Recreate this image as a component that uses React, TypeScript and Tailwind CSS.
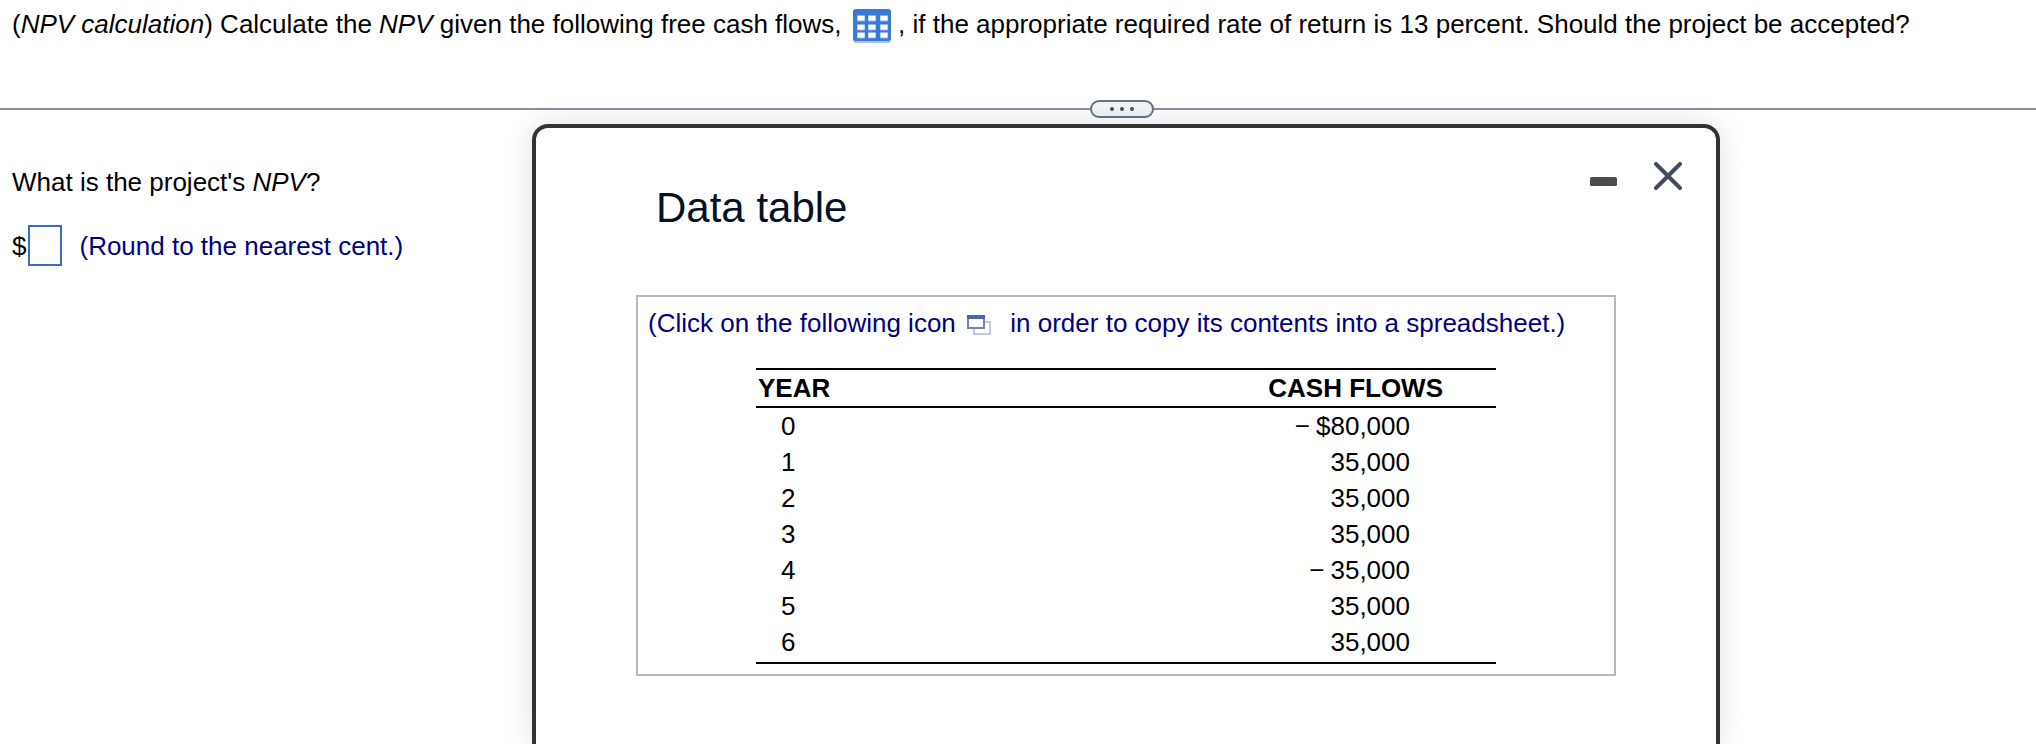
import React from "react";

interface CashFlow {
    year: number;
    amount: string;
    negative?: boolean;
}

const cashFlows: CashFlow[] = [
    { year: 0, amount: "$80,000", negative: true },
    { year: 1, amount: "35,000" },
    { year: 2, amount: "35,000" },
    { year: 3, amount: "35,000" },
    { year: 4, amount: "35,000", negative: true },
    { year: 5, amount: "35,000" },
    { year: 6, amount: "35,000" },
];

const TableIcon: React.FC = () => (
    <svg width="38" height="34" viewBox="0 0 38 34">
        <rect y="1" width="38" height="33" rx="3" fill="#a9c5ee" />
        <rect y="0" width="38" height="32" rx="3" fill="#3b7ad4" />
        {[6, 15, 23].map((y) =>
            [4, 15, 27].map((x) => (
                <g key={`${x}-${y}`}>
                    <rect x={x} y={y} width="8" height="6.5" rx="1" fill="#8fb3e8" />
                    <rect x={x + 0.5} y={y + 1} width="7" height="4.5" fill="#fff" />
                </g>
            ))
        )}
    </svg>
);

const CopyIcon: React.FC = () => (
    <svg width="24" height="20" viewBox="0 0 24 20">
        <rect x="7" y="7" width="16" height="12" fill="#fff" stroke="#c3c7e3" strokeWidth="2" />
        <rect x="1" y="1" width="16" height="12" fill="#fff" stroke="#7482b8" strokeWidth="2" />
        <rect width="18" height="4" fill="#5363a5" />
    </svg>
);

const CashFlowTable: React.FC = () => (
    <table className="w-full border-separate border-spacing-0 border-y-2 border-black pb-0.5 text-black">
        <thead>
            <tr>
                <th className="border-b-2 border-black p-0 pl-0.5 text-left font-bold">YEAR</th>
                <th className="border-b-2 border-black p-0 pr-[53px] text-right font-bold">
                    CASH FLOWS
                </th>
            </tr>
        </thead>
        <tbody>
            {cashFlows.map((flow) => (
                <tr key={flow.year}>
                    <td className="p-0 pl-[25px]">{flow.year}</td>
                    <td className="p-0 pr-[86px] text-right">
                        {flow.negative && <span className="mr-1.5">−</span>}
                        {flow.amount}
                    </td>
                </tr>
            ))}
        </tbody>
    </table>
);

const DataTableDialog: React.FC = () => (
    <section
        role="dialog"
        aria-labelledby="dialog-title"
        className="mr-[316px] flex-1 rounded-t-2xl border-4 border-b-0 border-[#333335] bg-white pb-16 shadow-[0_0_32px_rgba(0,0,0,0.12)]"
    >
        {/* Title bar */}
        <div className="flex items-start justify-between pt-[34px] pr-[34px] pl-[120px]">
            <h2
                id="dialog-title"
                className="mt-[22px] text-[42px] leading-[48px] text-[#05112a]"
            >
                Data table
            </h2>
            <div className="flex gap-9">
                <button type="button" aria-label="Minimize">
                    <svg width="28" height="28" viewBox="0 0 28 28">
                        <rect y="15" width="27" height="9" rx="1.5" fill="#4d4d4d" />
                    </svg>
                </button>
                <button type="button" aria-label="Close">
                    <svg width="28" height="28" viewBox="0 0 28 28">
                        <path
                            d="M2 2L26 26M26 2L2 26"
                            stroke="#434d5a"
                            strokeWidth="4"
                            strokeLinecap="round"
                        />
                    </svg>
                </button>
            </div>
        </div>

        {/* Contents */}
        <div className="mx-[100px] mt-[63px] border-2 border-[#b8b8b8] pt-2 pb-2.5">
            <p className="px-2.5 text-[#000080]">
                (Click on the following icon{" "}
                <button type="button" aria-label="Copy to spreadsheet" className="mx-1 align-middle">
                    <CopyIcon />
                </button>{" "}
                <span className="ml-2">
                    in order to copy its contents into a spreadsheet.)
                </span>
            </p>
            <div className="mx-[118px] mt-[27px]">
                <CashFlowTable />
            </div>
        </div>
    </section>
);

export default function App() {
    return (
        <div className="flex min-h-screen flex-col overflow-hidden bg-white font-['Liberation_Sans',Arial,sans-serif] text-[26px] leading-9 text-black">
            {/* Question */}
            <p className="px-3 pt-1.5">
                (<em>NPV calculation</em>) Calculate the <em>NPV</em> given the following free cash
                flows,{" "}
                <button type="button" aria-label="Open data table" className="ml-1 align-middle">
                    <TableIcon />
                </button>{" "}
                , if the appropriate required rate of return is 13 percent. Should the project be
                accepted?
            </p>

            {/* Divider with resize handle */}
            <div className="mt-[57px] flex items-center">
                <div className="h-0.5 w-[1090px] bg-[#8a8fa3]" />
                <button
                    type="button"
                    aria-label="Resize panes"
                    className="flex h-[18px] w-16 items-center justify-center gap-1.5 rounded-full border-2 border-[#647482] bg-[#f3f6f8]"
                >
                    <span className="size-1 rounded-full bg-[#4d4d4d]" />
                    <span className="size-1 rounded-full bg-[#4d4d4d]" />
                    <span className="size-1 rounded-full bg-[#4d4d4d]" />
                </button>
                <div className="h-0.5 flex-1 bg-[#8a8fa3]" />
            </div>

            <div className="flex flex-1 pt-1.5">
                {/* Answer */}
                <div className="w-[532px] shrink-0 px-3 pt-10">
                    <p>
                        What is the project's <em>NPV</em>?
                    </p>
                    <div className="mt-[25px] flex items-center">
                        <label htmlFor="npv">$</label>
                        <input
                            id="npv"
                            type="text"
                            className="ml-0.5 h-[41px] w-[34px] border-2 border-[#3a6cc8] px-1"
                        />
                        <span className="ml-[17px] text-[#000080]">(Round to the nearest cent.)</span>
                    </div>
                </div>

                <DataTableDialog />
            </div>
        </div>
    );
}
